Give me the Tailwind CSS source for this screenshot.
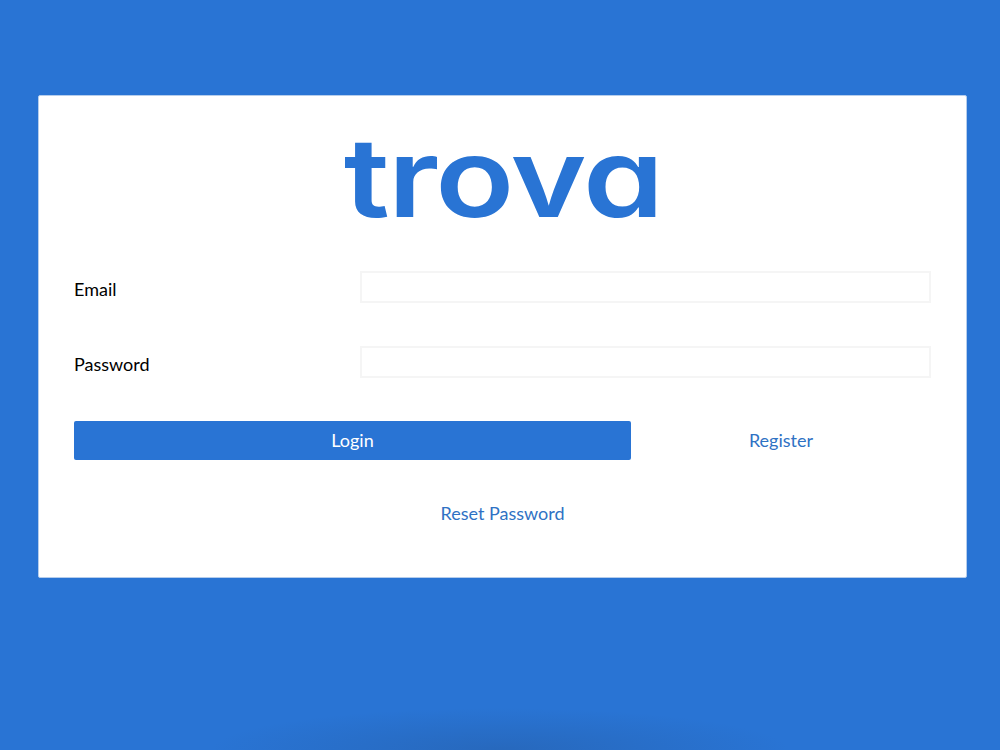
<!DOCTYPE html>
<html lang="en">
<head>
<meta charset="utf-8">
<title>Trova login</title>
<script src="https://cdn.jsdelivr.net/npm/@tailwindcss/browser@4"></script>
</head>
<body class="bg-[#2974d4] font-['Lato','Liberation_Sans',sans-serif]">
  <div class="relative h-[750px] w-[1000px] overflow-hidden pt-[95px] pl-[38px]">
    <div class="absolute bottom-0 left-[180px] h-[50px] w-[640px] bg-[radial-gradient(ellipse_290px_42px_at_50%_100%,rgba(35,80,140,0.32),rgba(35,80,140,0))]"></div>
    <main class="relative h-[483px] w-[929px] rounded-[2px] border border-[#b5cdec] bg-white px-[35px]">
      <div class="flex h-[175px] justify-center pt-[26px] pl-[2px]">
        <span class="origin-center scale-x-[1.18] font-['Inter',sans-serif] text-[110px] leading-[110px] font-semibold tracking-[-1.2px] text-[#2974d4] [font-feature-settings:'cv11']">trova</span>
      </div>
      <div class="flex h-[75px] items-start">
        <label class="w-[286px] pt-[6px] text-[18px] leading-[24px] text-black">Email</label>
        <input class="h-[32px] w-[571px] border-2 border-[#f5f5f5] bg-white" type="text">
      </div>
      <div class="flex h-[75px] items-start">
        <label class="w-[286px] pt-[6px] text-[18px] leading-[24px] text-black">Password</label>
        <input class="h-[32px] w-[571px] border-2 border-[#f5f5f5] bg-white" type="password">
      </div>
      <div class="flex h-[39px] items-center">
        <button class="h-[39px] w-[557px] rounded-[2px] bg-[#2974d4] text-[18px] text-white">Login</button>
        <a class="w-[300px] text-center text-[18px] text-[#2f72c4]">Register</a>
      </div>
      <div class="mt-[41px] text-center text-[18px] leading-[24px] text-[#2f72c4]">
        <a>Reset Password</a>
      </div>
    </main>
  </div>
</body>
</html>
